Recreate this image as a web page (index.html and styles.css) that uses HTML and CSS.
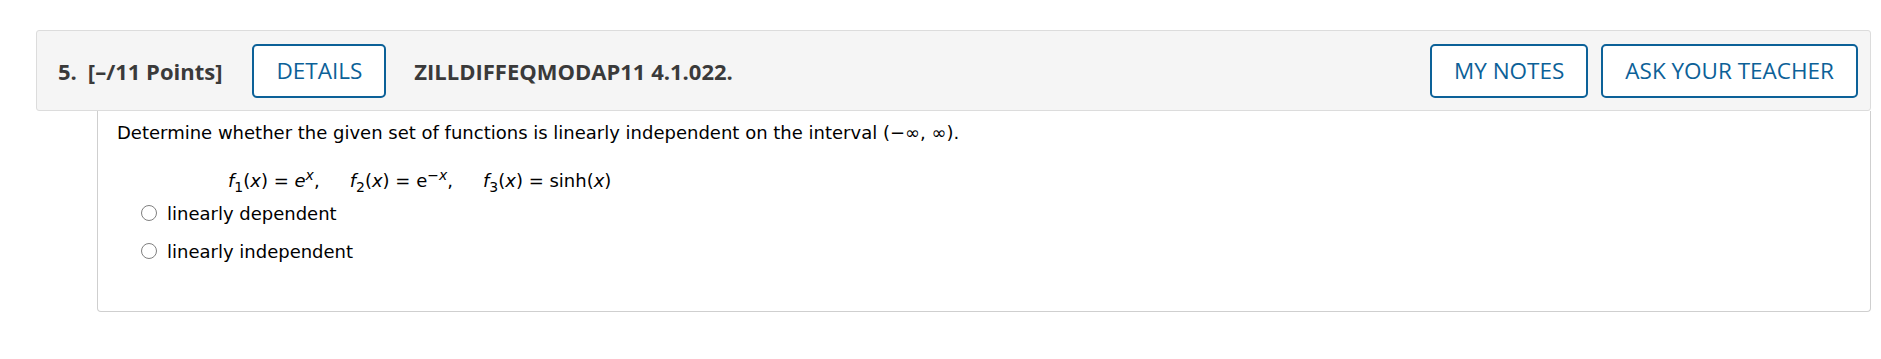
FILE: index.html
```html
<!DOCTYPE html>
<html>
<head>
<meta charset="utf-8">
<link rel="stylesheet" href="styles.css">
</head>
<body>
<div class="question">
  <div class="qhead">
    <span class="qnum">5.</span>
    <span class="qpts">[–/11 Points]</span>
    <button class="btn btn-details">DETAILS</button>
    <span class="qid">ZILLDIFFEQMODAP11 4.1.022.</span>
    <span class="spacer"></span>
    <button class="btn">MY NOTES</button>
    <button class="btn">ASK YOUR TEACHER</button>
  </div>
  <div class="qbody">
    <p class="prompt">Determine whether the given set of functions is linearly independent on the interval (−∞, ∞).</p>
    <p class="formula"><i>f</i><sub>1</sub>(<i>x</i>) = <i>e</i><sup><i>x</i></sup>,<span class="sep"></span><i>f</i><sub>2</sub>(<i>x</i>) = e<sup>−<i>x</i></sup>,<span class="sep"></span><i>f</i><sub>3</sub>(<i>x</i>) = sinh(<i>x</i>)</p>
    <label class="opt"><span class="radio"></span>linearly dependent</label>
    <label class="opt"><span class="radio"></span>linearly independent</label>
  </div>
</div>
</body>
</html>
```

FILE: styles.css
```css
html, body {
  margin: 0;
  padding: 0;
  background: #fff;
}
.question {
  padding: 30px 10px 0 36px;
}
.qhead {
  display: flex;
  align-items: center;
  height: 79px;
  border: 1px solid #dcdcdc;
  border-radius: 3px;
  background: #f5f5f5;
  padding: 0 12px 0 21px;
  font-family: "Open Sans", sans-serif;
  font-weight: 700;
  font-size: 22px;
  color: #3a3a3a;
}
.qnum {
  margin-right: 11px;
}
.qpts {
  margin-right: 30px;
}
.qid {
  margin-left: 28px;
}
.spacer {
  flex: 1;
}
.btn {
  height: 54px;
  border: 2px solid #0c6198;
  border-radius: 5px;
  background: #fff;
  color: #0c6198;
  font-family: "Open Sans", sans-serif;
  font-weight: 500;
  font-size: 22.5px;
  padding: 0 22px;
  margin-left: 13px;
}
.btn-details {
  margin-left: 0;
}
.qbody {
  margin-left: 61px;
  height: 200px;
  border: 1px solid #cfcfcf;
  border-top: none;
  border-radius: 0 0 4px 4px;
  padding: 0 19px;
  font-family: "DejaVu Sans", Verdana, sans-serif;
  font-size: 18px;
  color: #000;
}
.prompt {
  margin: 0;
  padding-top: 10px;
  line-height: 24px;
}
.formula {
  margin: 0;
  padding: 24px 0 0 111px;
  line-height: 24px;
}
.formula sub, .formula sup {
  font-size: 14px;
  line-height: 0;
}
.sep {
  display: inline-block;
  width: 30px;
}
.opt {
  display: flex;
  align-items: center;
  height: 38px;
  padding-left: 24px;
}
.radio {
  box-sizing: border-box;
  width: 16px;
  height: 16px;
  border: 1.5px solid #808080;
  border-radius: 50%;
  margin-right: 10px;
}
.opt:first-of-type {
  margin-top: 1px;
}
```
